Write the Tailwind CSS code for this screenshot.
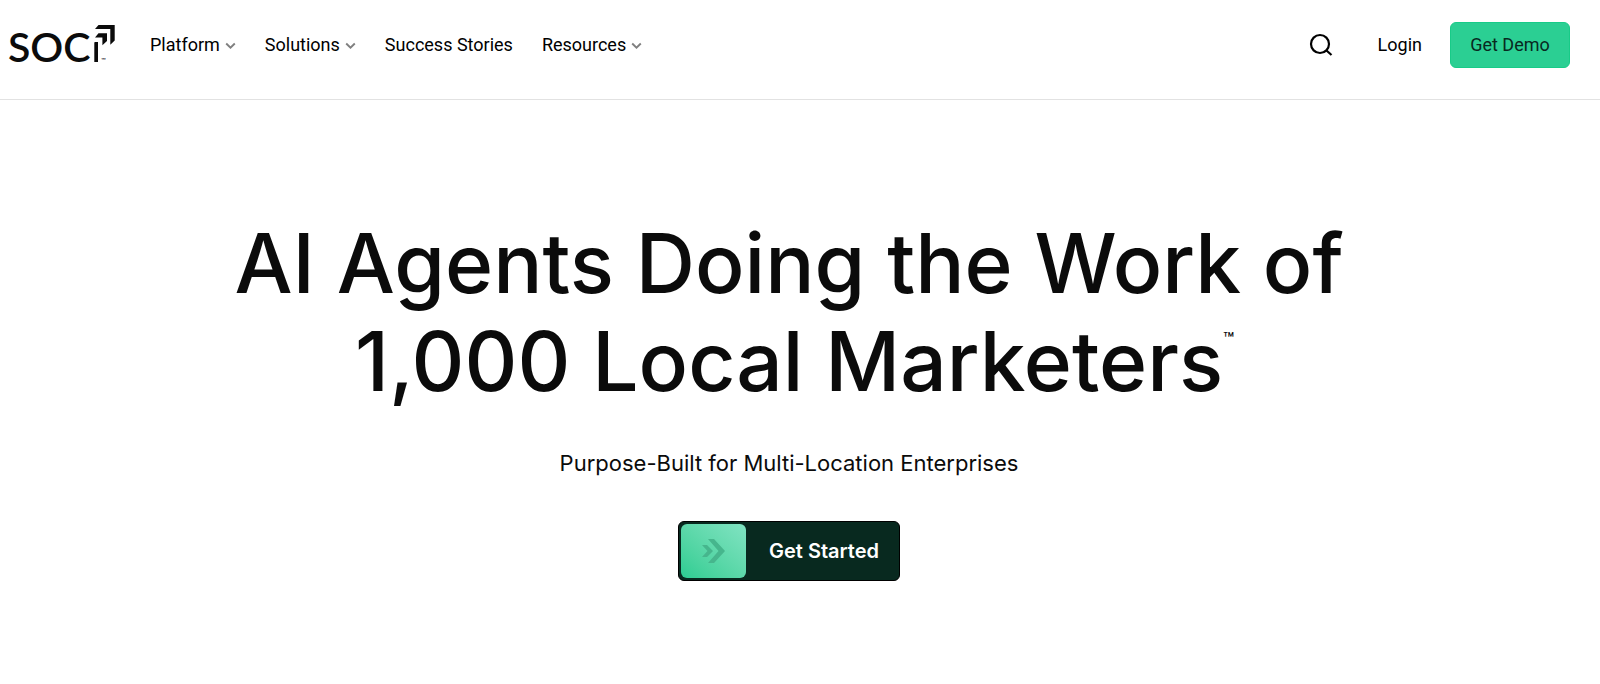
<!DOCTYPE html>
<html lang="en">
<head>
<meta charset="utf-8">
<meta name="viewport" content="width=device-width, initial-scale=1">
<title>SOCi</title>
<script src="https://cdn.jsdelivr.net/npm/@tailwindcss/browser@4"></script>
</head>
<body class="min-h-screen bg-white text-[#0b0b0b]">
<header class="flex items-start border-b border-[#e2e2e2] pt-[22px] pb-[31px] pl-2 pr-[30px] font-['Roboto',sans-serif] text-[18px] leading-6 text-black">
  <a href="#" aria-label="SOCi home" class="flex h-[46px] shrink-0 items-center">
    <svg width="108" height="54" viewBox="0 -4 108 54" fill="#0b0b0b" aria-hidden="true">
      <text x="0" y="40" font-family="Lato, sans-serif" font-size="41" font-weight="600">SOC</text>
      <path d="M86.300 20.500L87 20H90v20h-3.700z"/>
      <path d="M87 7l3.500-4H106.700V18.500L102.300 22.700V7z"/>
      <path d="M87 15.500l3.500-4.200H99V19l-4.600 4.300V15.500z"/>
      <text x="93" y="40" font-family="Lato, sans-serif" font-size="6">™</text>
    </svg>
  </a>
  <nav aria-label="Main" class="ml-[34px] flex h-[46px] items-center gap-[29px]">
    <button type="button" class="flex items-center gap-[5px]">Platform
      <svg width="11" height="8" viewBox="0 0 11 8" fill="none" stroke="#808080" stroke-width="1.900" aria-hidden="true"><path d="M1.200 2.500l4.300 4.200L9.800 2.500"/></svg></button>
    <button type="button" class="flex items-center gap-[5px]">Solutions
      <svg width="11" height="8" viewBox="0 0 11 8" fill="none" stroke="#808080" stroke-width="1.900" aria-hidden="true"><path d="M1.200 2.500l4.300 4.200L9.800 2.500"/></svg></button>
    <a href="#">Success Stories</a>
    <button type="button" class="flex items-center gap-[5px]">Resources
      <svg width="11" height="8" viewBox="0 0 11 8" fill="none" stroke="#808080" stroke-width="1.900" aria-hidden="true"><path d="M1.200 2.500l4.300 4.200L9.800 2.500"/></svg></button>
  </nav>
  <div class="ml-auto flex h-[46px] items-center">
    <button type="button" aria-label="Search">
      <svg width="24" height="24" viewBox="0 0 24 24" fill="none" stroke="#000" stroke-width="2.200" aria-hidden="true"><circle cx="11" cy="11" r="9"/><path d="M17.500 17.500l5 4.500"/></svg>
    </button>
    <a href="#" class="ml-[45px]">Login</a>
    <a href="#" class="ml-7 flex h-[46px] w-[120px] items-center justify-center rounded-md border border-[#18cb88] bg-[#2bcf93] text-[#08291f]">Get Demo</a>
  </div>
</header>
<main class="flex flex-col items-center pt-[115px] pr-[22px] text-center">
  <h1 class="font-['Inter',sans-serif] text-[82px] font-medium leading-[98px]">AI Agents Doing the Work of<br><span class="relative">1,000 Local Marketers<span class="absolute left-full top-4 text-[18px] leading-6">™</span></span></h1>
  <p class="mt-9 font-['Inter',sans-serif] text-[22px] leading-8">Purpose-Built for Multi-Location Enterprises</p>
  <a href="#" class="mt-[42px] flex h-[60px] items-center rounded-md border border-black bg-[#08291f] pl-[2px] pr-5 font-['Inter',sans-serif] text-[20px] font-semibold leading-6 text-white">
    <span class="flex h-[54px] w-[65px] items-center justify-center rounded-md bg-linear-to-tr from-[#2acd92] to-[#80e3c2]">
      <svg width="24" height="24" viewBox="0 0 24 24" fill="#46b68d" aria-hidden="true"><path d="M7 0h6l11 12-11 12H7l10.500-12z"/><path d="M1 6h5l6 6-6 6H1l5.500-6z"/></svg>
    </span>
    <span class="ml-[23px]">Get Started</span>
  </a>
</main>
</body>
</html>
